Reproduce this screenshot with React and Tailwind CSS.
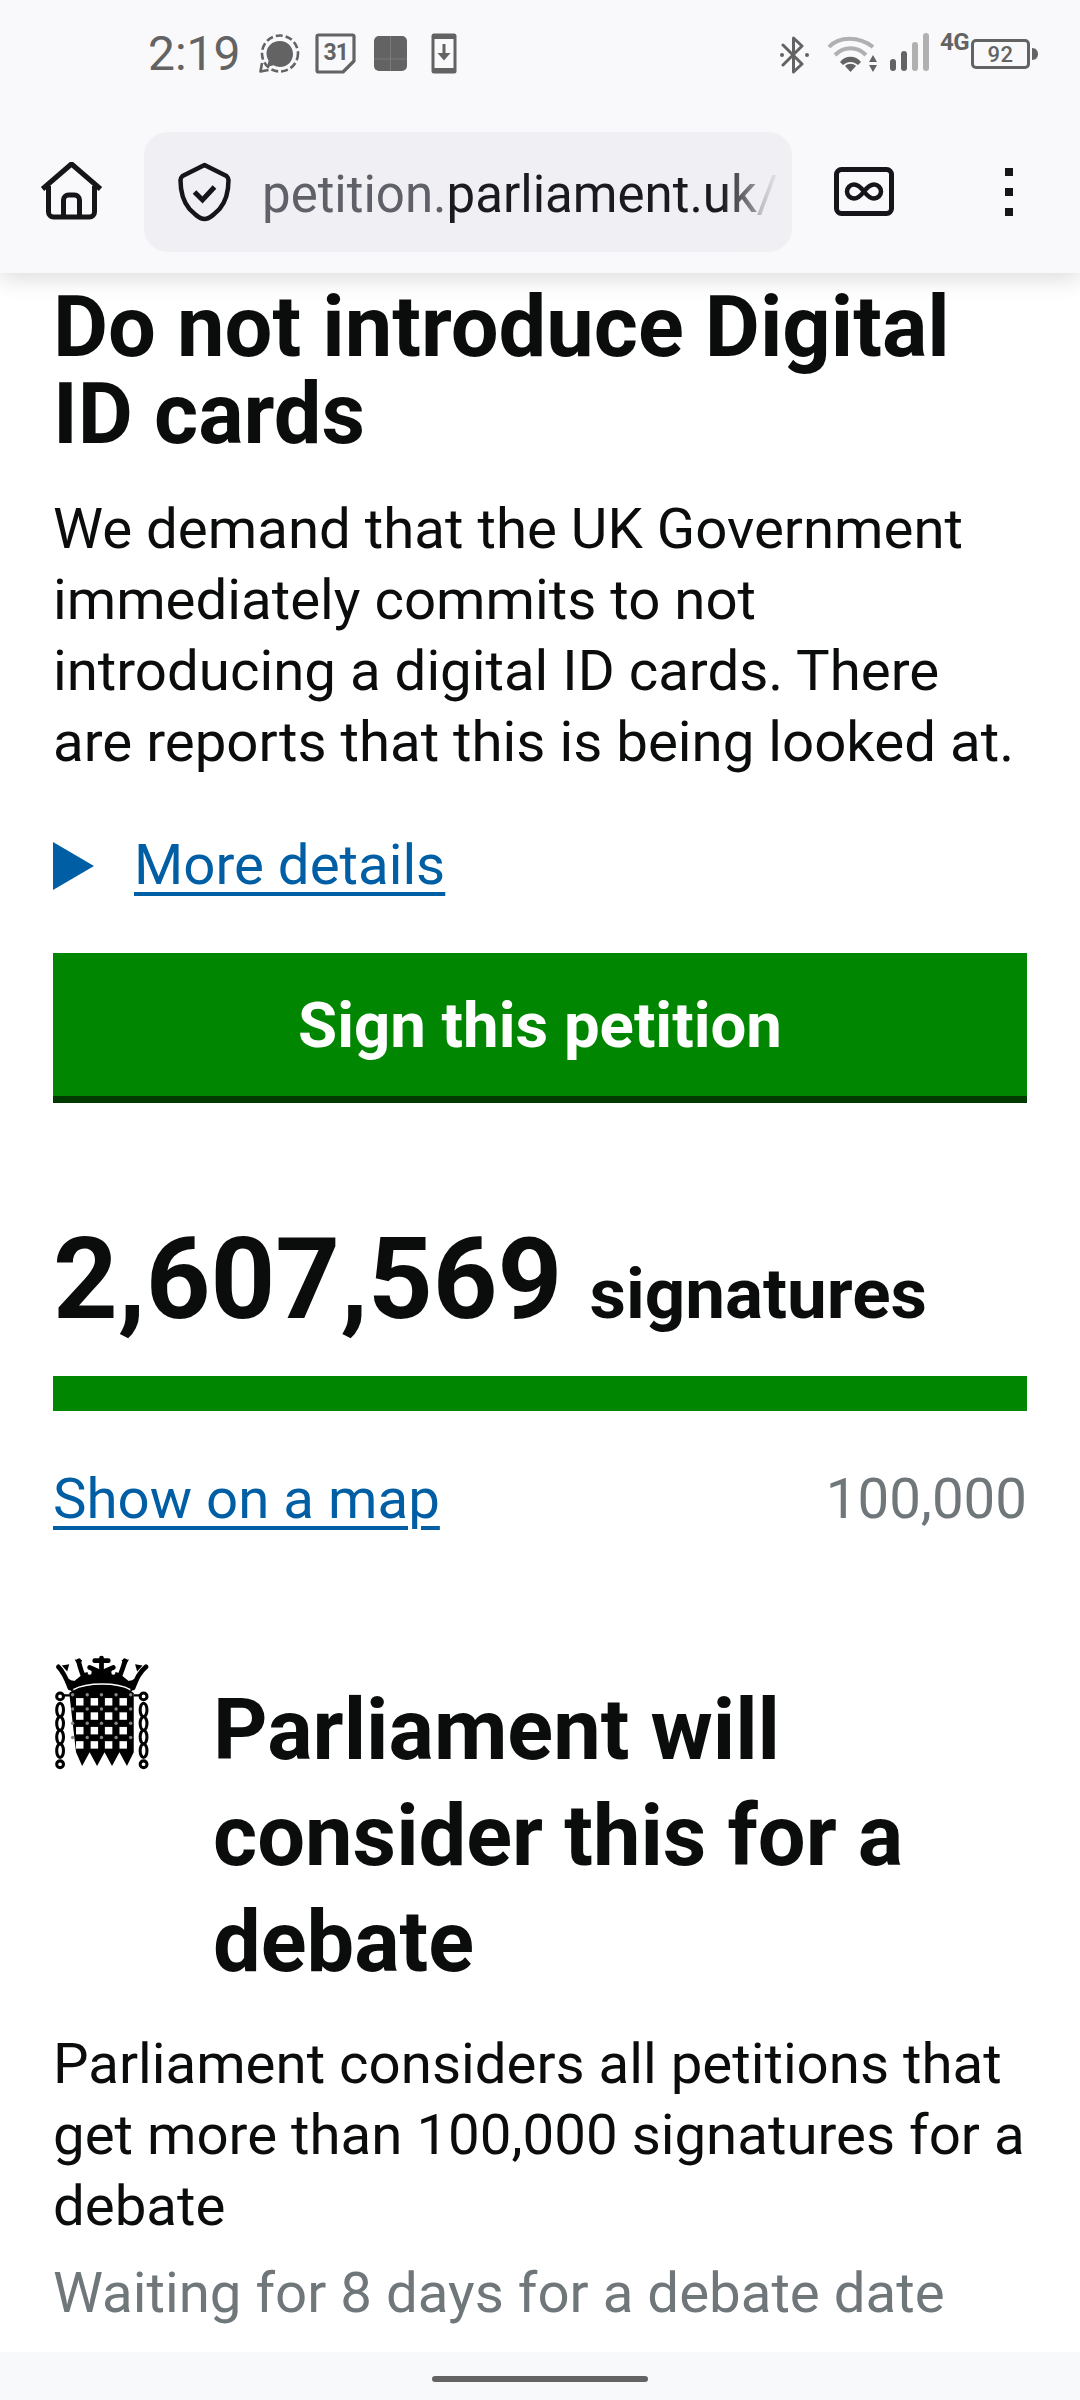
// Petition page inside a mobile browser
const roboto = { fontFamily: 'Roboto, sans-serif' }

function SignalMessengerIcon() {
  return (
    <svg width="41" height="41" viewBox="0 0 41 41" fill="none">
      <path d="M21 8C13 8 7.500 13.500 7.500 20.500c0 2.600.8 5 2.100 6.900L8 34l6.500-1.700c2 1.100 4.200 1.700 6.500 1.700 7.500 0 13-5.800 13-13S28.500 8 21 8z" fill="#636363" />
      <circle cx="21" cy="20.500" r="18" stroke="#636363" strokeWidth="2.600" strokeDasharray="7 3" />
      <path d="M3 30l-1.500 8.500 8-1.500" stroke="#636363" strokeWidth="2.600" strokeLinejoin="round" />
    </svg>
  )
}

function CalendarIcon() {
  return (
    <div className="relative w-[41px] h-[41px]" >
      <svg width="41" height="41" viewBox="0 0 41 41" fill="none" className="absolute inset-0">
        <path d="M2 3.500A1.500 1.500 0 013.500 2h34A1.500 1.500 0 0139 3.500V28L28 39H3.500A1.500 1.500 0 012 37.500z" stroke="#636363" strokeWidth="3.200" strokeLinejoin="round" />
      </svg>
      <span className="absolute left-[9px] top-[6px] text-[23px] leading-[27px] font-bold text-[#636363] tracking-[-1px]">31</span>
    </div>
  )
}

function PhoneDownloadIcon() {
  return (
    <svg width="26" height="41" viewBox="0 0 26 41" fill="none">
      <rect x="0.500" y="0.500" width="25" height="40" rx="2.500" fill="#636363" />
      <rect x="3.500" y="6" width="19" height="29" fill="#f9f9fb" />
      <path d="M11.500 11h3v9h5L13 27.500 6.500 20h5z" fill="#636363" />
    </svg>
  )
}

function TilesIcon() {
  return (
    <svg width="33" height="35" viewBox="0 0 33 35" className="mt-[3px]">
      <rect width="33" height="35" rx="5" fill="#636363" />
      <path d="M16.500 0v35M0 23h33" stroke="#7a7a7a" strokeWidth="1" />
    </svg>
  )
}

function BluetoothIcon() {
  return (
    <svg width="29" height="38" viewBox="0 0 29 38" fill="none">
      <path d="M3 9l19 19-8.500 8V2L22 10 3 29" stroke="#636363" strokeWidth="3" strokeLinejoin="round" strokeLinecap="round" />
      <circle cx="2" cy="19" r="2" fill="#636363" />
      <circle cx="27" cy="19" r="2" fill="#636363" />
    </svg>
  )
}

function WifiIcon() {
  return (
    <svg width="52" height="38" viewBox="0 0 52 38" fill="none">
      <path d="M2 12C12 1 32 1 46 12" stroke="#b0b0b0" strokeWidth="4" />
      <path d="M8 20C17 11 30 11 39 20" stroke="#b0b0b0" strokeWidth="4" />
      <path d="M13 27C18 20 29 20 34 27l-3 3C26 26 21 26 16 30z" fill="#636363" />
      <path d="M18 31c3-3 8-3 11 0l-5.500 6z" fill="#636363" />
      <path d="M46 20l4 7h-8zM42 30h8l-4 7z" fill="#636363" />
    </svg>
  )
}

function SignalBars() {
  return (
    <div className="flex items-end gap-[5px] h-[38px] w-[42px]">
      <span className="w-[6px] h-[12px] rounded-[3px] bg-[#636363]" />
      <span className="w-[6px] h-[20px] rounded-[3px] bg-[#636363]" />
      <span className="w-[6px] h-[29px] rounded-[3px] bg-[#b0b0b0]" />
      <span className="w-[6px] h-[38px] rounded-[3px] bg-[#b0b0b0]" />
    </div>
  )
}

function Battery() {
  return (
    <div className="flex items-center gap-[2px]">
      <div className="w-[59px] h-[30px] border-[3px] border-[#636363] rounded-[5px] flex items-center justify-center text-[22px] font-medium text-[#636363] tracking-[0.5px]">
        92
      </div>
      <svg width="6" height="12" viewBox="0 0 6 12"><path d="M0 0c4 0 6 3 6 6s-2 6-6 6z" fill="#636363" /></svg>
    </div>
  )
}

function StatusBar() {
  return (
    <div className="h-[110px] flex justify-between pt-[33px] pl-[148px] pr-[42px] text-[#636363]">
      <div className="flex items-start">
        <span className="text-[48px] leading-[41px] mr-[18px]">2:19</span>
        <SignalMessengerIcon />
        <span className="w-[15px]" />
        <CalendarIcon />
        <span className="w-[18px]" />
        <TilesIcon />
        <span className="w-[24px]" />
        <PhoneDownloadIcon />
      </div>
      <div className="flex items-start">
        <div className="mt-[3px] mr-[18px]"><BluetoothIcon /></div>
        <div className="mt-[2px] mr-[11px]"><WifiIcon /></div>
        <div className="mr-[8px]"><SignalBars /></div>
        <span className="text-[24px] leading-[18px] font-bold w-[31px] tracking-[-0.5px]">4G</span>
        <div className="mt-[6px]"><Battery /></div>
      </div>
    </div>
  )
}

function Toolbar() {
  return (
    <div className="h-[163px] flex items-start pt-[22px]">
      <div className="w-[144px] pl-[40px] pt-[30px]">
        <svg width="63" height="58" viewBox="0 0 62 58" fill="none" stroke="#16161a" strokeWidth="5">
          <path d="M2 27L31 2l29 25" strokeLinejoin="round" />
          <path d="M8 24v26a5 5 0 005 5h36a5 5 0 005-5V24" />
          <path d="M23 55V38a5 5 0 015-5h6a5 5 0 015 5v17" />
        </svg>
      </div>
      <div className="relative w-[648px] h-[120px] rounded-[24px] bg-[#f0f0f4] flex items-center pl-[33px] overflow-hidden">
        <svg width="55" height="60" viewBox="0 0 54 60" fill="none" stroke="#16161a" strokeWidth="4.500" className="shrink-0">
          <path d="M27 3l22 11c1 1 2 2 2 4 0 14-3 22-9 29-5 5-10 10-15 10S17 52 12 47C6 40 3 32 3 18c0-2 1-3 2-4z" strokeLinejoin="round" />
          <path d="M17 30l8 8 12-13" strokeWidth="5" />
        </svg>
        <span className="ml-[30px] mt-[6px] text-[51px] whitespace-nowrap text-[#5f6068]">
          petition.<span className="text-[#1b1b1f]">parliament.uk</span>/petitions/730194
        </span>
        <div className="absolute right-0 top-0 h-full w-[70px] bg-gradient-to-r from-transparent to-[#f0f0f4] to-[85%]" />
      </div>
      <div className="pl-[42px] pt-[35px]">
        <svg width="60" height="49" viewBox="0 0 60 49" fill="none" stroke="#16161a">
          <rect x="2.500" y="2.500" width="55" height="44" rx="5" strokeWidth="5" />
          <path d="M30 24.500c-3-4-6-7-10-7a7 7 0 000 14c4 0 7-3 10-7zm0 0c3-4 6-7 10-7a7 7 0 010 14c-4 0-7-3-10-7z" strokeWidth="4.500" />
        </svg>
      </div>
      <div className="pl-[111px] pt-[36px] flex flex-col gap-[12px]">
        <span className="w-[8px] h-[8px] bg-[#16161a]" />
        <span className="w-[8px] h-[8px] bg-[#16161a]" />
        <span className="w-[8px] h-[8px] bg-[#16161a]" />
      </div>
    </div>
  )
}

// House of Commons portcullis, coordinates follow a 3x crop of the logo
function Portcullis() {
  const squares = []
  const dots = []
  for (const y of [180, 222, 265, 307]) {
    for (const x of [140, 183, 225, 268]) {
      squares.push(<rect key={`${x}-${y}`} x={x} y={y} width="22" height="22" fill="#fff" />)
    }
  }
  for (const y of [170, 212, 254, 296]) {
    for (const x of [130, 173, 215, 258, 301]) {
      dots.push(<circle key={`${x}-${y}`} cx={x} cy={y} r="5" fill="#888" />)
    }
  }
  const links = [
    { y: 175, ry: 10 },
    { y: 215, ry: 20 },
    { y: 255, ry: 20 },
    { y: 295, ry: 20 },
    { y: 335, ry: 20 },
    { y: 375, ry: 10 },
  ]
  return (
    <svg width="94" height="115" viewBox="78 55 277 335" className="shrink-0 ml-[2px]">
      <path d="M125 160L108 120 135 130 165 105 215 95 265 105 295 130 322 120 305 160c-50-16-130-16-180 0z" fill="#000" />
      <g stroke="#000" strokeWidth="14" fill="none" strokeLinecap="round">
        <path d="M122 150C112 125 105 105 88 88" />
        <path d="M168 135C160 110 150 90 148 70" />
        <path d="M262 135C270 110 280 90 284 70" />
        <path d="M308 150C318 125 325 105 346 88" />
        <path d="M215 110V62M195 70h40" />
        <path d="M215 105L180 90M215 105L250 90" />
      </g>
      <path d="M98 84l22-4-6 22zM136 66l22 2-10 20zM296 66l-22 2 10 20zM336 84l-22-4 6 22z" fill="#000" />
      <circle cx="128" cy="122" r="6" fill="#fff" />
      <circle cx="180" cy="105" r="6" fill="#fff" />
      <circle cx="250" cy="105" r="6" fill="#fff" />
      <circle cx="302" cy="122" r="6" fill="#fff" />
      <path d="M120 165c40-30 150-30 190 0v175l-20 40-22-40-22 40-22-40-22 40-22-40-22 40-18-40z" fill="#000" />
      <path d="M132 155c40-22 130-22 168 0" stroke="#fff" strokeWidth="4" fill="none" />
      {squares}
      {dots}
      {links.map(l => (
        <g key={l.y} fill="none" stroke="#000" strokeWidth="9">
          <ellipse cx="93" cy={l.y} rx="10" ry={l.ry} />
          <ellipse cx="339" cy={l.y} rx="10" ry={l.ry} />
        </g>
      ))}
      <path d="M100 172h22M310 172h22" stroke="#000" strokeWidth="6" />
    </svg>
  )
}

export default function App() {
  return (
    <div className="w-[1080px] h-[2400px] flex flex-col overflow-hidden bg-white text-[#0b0c0c]" style={roboto}>
      <header className="relative z-10 bg-[#f9f9fb] shadow-[0_5px_22px_rgba(0,0,0,0.15)]">
        <StatusBar />
        <Toolbar />
      </header>

      <main className="flex-1 px-[53px] pt-[11px]">
        <h1 className="text-[84.800px] leading-[87px] font-bold">Do not introduce Digital ID cards</h1>
        <p className="mt-[36px] text-[56.400px] leading-[71px]">
          We demand that the UK Government immediately commits to not introducing a digital ID cards. There are reports that this is being looked at.
        </p>

        <div className="mt-[52px] flex items-center">
          <svg width="41" height="48" viewBox="0 0 41 48" className="shrink-0"><path d="M0 0l41 24L0 48z" fill="#005ea5" /></svg>
          <a className="ml-[40px] text-[56.400px] leading-[71px] text-[#005ea5] underline decoration-[4px] underline-offset-[8px]">More details</a>
        </div>

        <button className="mt-[52px] w-full h-[150px] pt-[2px] bg-[#008600] border-b-[7px] border-[#003a00] text-white text-[63.500px] font-bold">
          Sign this petition
        </button>

        <div className="mt-[112px] flex items-baseline">
          <span className="text-[113px] leading-[130px] font-bold">2,607,569</span>
          <span className="ml-[27px] text-[71px] font-bold">signatures</span>
        </div>
        <div className="mt-[28px] h-[35px] bg-[#008600]" />
        <div className="mt-[53px] flex justify-between items-center text-[56.400px] leading-[71px]">
          <a className="text-[#005ea5] underline decoration-[4px] underline-offset-[8px]">Show on a map</a>
          <span className="text-[#6f777b]">100,000</span>
        </div>

        <section className="mt-[120px] flex">
          <Portcullis />
          <h2 className="ml-[64px] text-[84.800px] leading-[106px] font-bold mt-[22px]">Parliament will consider this for a debate</h2>
        </section>
        <p className="mt-[34px] text-[56.400px] leading-[71px]">
          Parliament considers all petitions that get more than 100,000 signatures for a debate
        </p>
        <p className="mt-[16px] text-[56.400px] leading-[71px] text-[#6f777b]">Waiting for 8 days for a debate date</p>
      </main>

      <footer className="h-[48px] bg-[#f8f9fb] flex justify-center pt-[24px]">
        <span className="w-[216px] h-[6px] rounded-full bg-[#636363]" />
      </footer>
    </div>
  )
}
